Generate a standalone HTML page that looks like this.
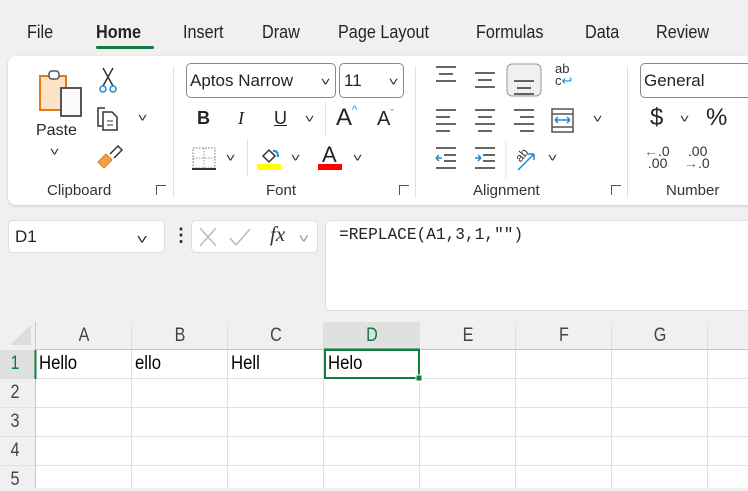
<!DOCTYPE html>
<html><head><meta charset="utf-8"><style>
*{margin:0;padding:0;box-sizing:border-box}
body{width:748px;height:488px;overflow:hidden;background:#f0f0f0;font-family:"Liberation Sans",sans-serif;color:#242424;position:relative}
.a{position:absolute;white-space:nowrap}
.tab{top:22px;font-size:18px;transform:scaleX(.9);transform-origin:left}
.ribbon{left:8px;top:56px;width:760px;height:149px;background:#fff;border-radius:8px;box-shadow:0 1px 3px rgba(0,0,0,.15)}
.lbl{font-size:15px;top:182px;color:#333}
.sep{width:1px;background:#e0e0e0}
.box{border:1px solid #8a8a8a;border-radius:5px;background:#fff}
.chev{font-size:12px;color:#333;transform:scaleX(1.4)}
.cell{font-size:19px;transform:scaleX(.88);transform-origin:left;color:#000}
.hd{font-size:19px;color:#444;text-align:center;transform:scaleX(.85)}
</style></head><body>
<div class="a tab" style="left:27px">File</div>
<div class="a tab" style="left:96px;font-weight:bold">Home</div>
<div class="a" style="left:96px;top:46px;width:58px;height:3px;background:#107c41;border-radius:2px"></div>
<div class="a tab" style="left:183px">Insert</div>
<div class="a tab" style="left:262px">Draw</div>
<div class="a tab" style="left:338px">Page Layout</div>
<div class="a tab" style="left:476px">Formulas</div>
<div class="a tab" style="left:585px">Data</div>
<div class="a tab" style="left:656px">Review</div>

<div class="a ribbon"></div>
<!-- Clipboard -->
<svg class="a" style="left:36px;top:68px" width="48" height="52"><rect x="4" y="8" width="26" height="34" fill="#fbe3c6" stroke="#e07b1a" stroke-width="2"/><rect x="13" y="3" width="10" height="8" rx="3" fill="#fff" stroke="#555" stroke-width="1.5"/><rect x="25" y="20" width="20" height="28" fill="#fafafa" stroke="#444" stroke-width="1.8"/></svg>
<div class="a" style="left:36px;top:122px;font-size:16px">Paste</div>
<div class="a chev" style="left:51px;top:145px">˅</div>
<svg class="a" style="left:98px;top:66px" width="22" height="28"><path d="M5 2 L15 20 M15 2 L5 20" stroke="#333" stroke-width="1.5"/><circle cx="5" cy="23" r="3" fill="none" stroke="#1e88d0" stroke-width="1.5"/><circle cx="15" cy="23" r="3" fill="none" stroke="#1e88d0" stroke-width="1.5"/></svg>
<svg class="a" style="left:96px;top:106px" width="28" height="28"><path d="M9 2H2V20H6" fill="none" stroke="#333" stroke-width="1.5"/><path d="M7 6H16L21 11V24H7Z" fill="#fff" stroke="#333" stroke-width="1.5"/><path d="M11 15H17M11 19H17" stroke="#333"/></svg>
<div class="a chev" style="left:139px;top:111px">˅</div>
<svg class="a" style="left:96px;top:144px" width="28" height="26"><path d="M2 18 L10 10 L16 16 L8 24Z" fill="#f2a04a" stroke="#e07b1a"/><path d="M14 10 L22 2 L26 6 L18 14" fill="none" stroke="#333" stroke-width="1.5"/></svg>
<div class="a lbl" style="left:47px">Clipboard</div>
<div class="a" style="left:156px;top:185px;width:10px;height:10px;border:1px solid #555;border-right:none;border-bottom:none"></div>
<div class="a sep" style="left:173px;top:66px;height:132px"></div>
<!-- Font -->
<div class="a box" style="left:186px;top:63px;width:150px;height:35px"></div>
<div class="a" style="left:190px;top:71px;font-size:17px">Aptos Narrow</div>
<div class="a chev" style="left:322px;top:75px">˅</div>
<div class="a box" style="left:339px;top:63px;width:65px;height:35px"></div>
<div class="a" style="left:344px;top:71px;font-size:17px">11</div>
<div class="a chev" style="left:390px;top:75px">˅</div>
<div class="a" style="left:197px;top:108px;font-size:18px;font-weight:bold">B</div>
<div class="a" style="left:238px;top:108px;font-size:18px;font-style:italic;font-family:'Liberation Serif'">I</div>
<div class="a" style="left:274px;top:108px;font-size:18px;text-decoration:underline">U</div>
<div class="a chev" style="left:306px;top:112px">˅</div>
<div class="a sep" style="left:325px;top:102px;height:34px"></div>
<div class="a" style="left:336px;top:104px;font-size:24px">A<span style="font-size:11px;color:#1e88d0;vertical-align:top">^</span></div>
<div class="a" style="left:377px;top:108px;font-size:20px">A<span style="font-size:11px;color:#1e88d0;vertical-align:top">ˇ</span></div>
<svg class="a" style="left:191px;top:146px" width="26" height="26"><rect x="2" y="2" width="22" height="20" fill="none" stroke="#777" stroke-dasharray="1.5 1.5"/><path d="M13 2V22M2 12H24" stroke="#999" stroke-dasharray="1.5 1.5"/><path d="M1 23H25" stroke="#333" stroke-width="2"/></svg>
<div class="a chev" style="left:227px;top:151px">˅</div>
<div class="a sep" style="left:247px;top:140px;height:36px"></div>
<svg class="a" style="left:257px;top:145px" width="26" height="26"><path d="M6 11 L12 5 L18 11 L12 17Z" fill="none" stroke="#333" stroke-width="1.5"/><path d="M16 6 Q21 5 21 12" fill="none" stroke="#1e88d0" stroke-width="2"/><rect x="0" y="19" width="24" height="6" fill="#ffff00"/></svg>
<div class="a chev" style="left:292px;top:151px">˅</div>
<div class="a" style="left:322px;top:142px;font-size:22px">A</div>
<div class="a" style="left:318px;top:164px;width:24px;height:6px;background:#ff0000"></div>
<div class="a chev" style="left:354px;top:151px">˅</div>
<div class="a lbl" style="left:266px">Font</div>
<div class="a" style="left:399px;top:185px;width:10px;height:10px;border:1px solid #555;border-right:none;border-bottom:none"></div>
<div class="a sep" style="left:415px;top:66px;height:132px"></div>
<!-- Alignment -->
<svg class="a" style="left:430px;top:60px" width="190" height="120" stroke="#333" stroke-width="1.5" fill="none">
<path d="M6 7H26M9 14H23M6 21H26"/>
<path d="M45 13H65M48 20H62M45 27H65"/>
<rect x="77" y="4" width="34" height="32" rx="5" fill="#f0f0f0" stroke="#999" stroke-width="1"/>
<path d="M84 21H104M87 28H101M84 34H104" />
<path d="M6 50H26M6 57H20M6 64H26M6 71H20"/>
<path d="M45 50H65M48 57H62M45 64H65M48 71H62"/>
<path d="M84 50H104M90 57H104M84 64H104M90 71H104"/>
<rect x="122" y="49" width="21" height="23" stroke="#555"/><path d="M122 54H143M122 67H143" stroke="#555"/>
<path d="M125 60H140M125 60l3-3M125 60l3 3M140 60l-3-3M140 60l-3 3" stroke="#1e88d0"/>
<path d="M6 88H26M14 95H26M14 101H26M6 108H26"/><path d="M6 98H12M6 98l3-3M6 98l3 3" stroke="#1e88d0"/>
<path d="M45 88H65M53 95H65M53 101H65M45 108H65"/><path d="M45 98H51M51 98l-3-3M51 98l-3 3" stroke="#1e88d0"/>
<path d="M76 82V118" stroke="#ddd" stroke-width="1"/>
<path d="M88 110L104 94M104 94h-6M104 94v6" stroke="#1e88d0"/>
</svg>
<div class="a" style="left:555px;top:63px;font-size:13px;line-height:12px;color:#333">ab<br>c<span style="color:#1e88d0">↩</span></div>
<div class="a" style="left:515px;top:148px;font-size:12px;color:#333;transform:rotate(-50deg)">ab</div>
<div class="a chev" style="left:594px;top:112px">˅</div>
<div class="a chev" style="left:549px;top:151px">˅</div>
<div class="a lbl" style="left:473px">Alignment</div>
<div class="a" style="left:611px;top:185px;width:10px;height:10px;border:1px solid #555;border-right:none;border-bottom:none"></div>
<div class="a sep" style="left:627px;top:66px;height:132px"></div>
<!-- Number -->
<div class="a box" style="left:640px;top:63px;width:120px;height:35px"></div>
<div class="a" style="left:644px;top:71px;font-size:17px">General</div>
<div class="a" style="left:650px;top:104px;font-size:24px">$</div>
<div class="a chev" style="left:681px;top:112px">˅</div>
<div class="a" style="left:706px;top:104px;font-size:24px">%</div>
<div class="a" style="left:644px;top:145px;font-size:14px;line-height:12px;color:#333"><span style="color:#1e88d0">←</span>.0<br>&nbsp;.00</div>
<div class="a" style="left:684px;top:145px;font-size:14px;line-height:12px;color:#333">&nbsp;.00<br><span style="color:#1e88d0">→</span>.0</div>
<div class="a lbl" style="left:666px">Number</div>

<!-- Formula bar -->
<div class="a" style="left:8px;top:220px;width:157px;height:33px;background:#fff;border-radius:5px;border:1px solid #ddd"></div>
<div class="a" style="left:15px;top:227px;font-size:17px">D1</div>
<div class="a chev" style="left:138px;top:231px;font-size:14px">˅</div>
<div class="a" style="left:172px;top:225px;font-size:18px;font-weight:bold">⋮</div>
<div class="a" style="left:191px;top:220px;width:127px;height:33px;background:#fff;border-radius:5px;border:1px solid #ddd"></div>
<svg class="a" style="left:198px;top:226px" width="60" height="22" stroke="#bbb" stroke-width="1.5" fill="none"><path d="M2 2L18 20M18 2L2 20"/><path d="M32 12L38 19L52 3"/></svg>
<div class="a" style="left:270px;top:222px;font-size:21px;font-style:italic;font-family:'Liberation Serif';color:#333">fx</div>
<div class="a chev" style="left:300px;top:231px;font-size:13px;color:#999">˅</div>
<div class="a" style="left:325px;top:220px;width:430px;height:91px;background:#fff;border-radius:5px;border:1px solid #ddd"></div>
<div class="a" style="left:339px;top:226px;font-size:17px;font-family:'Liberation Mono';transform:scaleX(.95);transform-origin:left">=REPLACE(A1,3,1,"")</div>

<!-- Grid -->
<svg class="a" style="left:0;top:320px" width="748" height="168">
<rect x="36" y="30" width="712" height="138" fill="#fff"/>
<polygon points="31,5 31,25 10,25" fill="#ddd"/>
<rect x="324" y="2" width="96" height="27" fill="#e0e0e0"/>
<rect x="0" y="30" width="35" height="29" fill="#e0e0e0"/>
<g stroke="#e1e1e1">
<path d="M131.5 30V168M227.5 30V168M323.5 30V168M419.5 30V168M515.5 30V168M611.5 30V168M707.5 30V168"/>
<path d="M131.5 2V29M227.5 2V29M323.5 2V29M419.5 2V29M515.5 2V29M611.5 2V29M707.5 2V29"/>
<path d="M0 58.5H748M0 87.5H748M0 116.5H748M0 145.5H748"/>
</g>
<path d="M35 29.5H748" stroke="#c8c8c8"/>
<path d="M35.5 2V168" stroke="#c8c8c8"/>
<path d="M35.5 30V59" stroke="#107c41" stroke-width="2"/>
<path d="M324 29.5H420" stroke="#107c41" stroke-width="2"/>
<rect x="325" y="30" width="94" height="28" fill="none" stroke="#107c41" stroke-width="2"/>
<rect x="416" y="55" width="6" height="6" fill="#107c41" stroke="#fff"/>
</svg>
<div class="a hd" style="left:36px;top:325px;width:96px">A</div>
<div class="a hd" style="left:132px;top:325px;width:96px">B</div>
<div class="a hd" style="left:228px;top:325px;width:96px">C</div>
<div class="a hd" style="left:324px;top:325px;width:96px;color:#107c41">D</div>
<div class="a hd" style="left:420px;top:325px;width:96px">E</div>
<div class="a hd" style="left:516px;top:325px;width:96px">F</div>
<div class="a hd" style="left:612px;top:325px;width:96px">G</div>
<div class="a hd" style="left:0;top:353px;width:30px;color:#107c41">1</div>
<div class="a hd" style="left:0;top:382px;width:30px">2</div>
<div class="a hd" style="left:0;top:411px;width:30px">3</div>
<div class="a hd" style="left:0;top:440px;width:30px">4</div>
<div class="a hd" style="left:0;top:469px;width:30px">5</div>
<div class="a cell" style="left:39px;top:353px">Hello</div>
<div class="a cell" style="left:135px;top:353px">ello</div>
<div class="a cell" style="left:231px;top:353px">Hell</div>
<div class="a cell" style="left:328px;top:353px">Helo</div>
</body></html>
